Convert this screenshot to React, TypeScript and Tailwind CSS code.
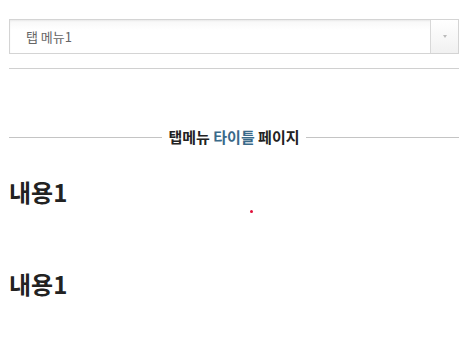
import React from "react";

export default function App() {
  const font = { fontFamily: '"Noto Sans CJK KR", "Noto Sans", sans-serif' };
  return (
    <div className="w-[474px] h-[345px] bg-white relative overflow-hidden" style={font}>
      <div className="pl-[9px] pr-[15px] pt-[19px]">
        <div className="flex h-[35px] border border-[#d4d4d4] bg-gradient-to-b from-[#f7f7f7] to-white to-[30%] shadow-[inset_0_1px_2px_rgba(0,0,0,0.06)]">
          <div className="flex-1 flex items-center pl-[16px] text-[13px] text-[#666]">탭 메뉴1</div>
          <div className="w-[28px] border-l border-[#d8d8d8] bg-gradient-to-b from-white to-[#f1f1f1] flex items-center justify-center">
            <div className="w-0 h-0 border-l-[2.5px] border-r-[2.5px] border-t-[3px] border-l-transparent border-r-transparent border-t-[#bbb]" />
          </div>
        </div>
        <div className="mt-[14px] h-px bg-[#d0d0d0]" />
        <div className="mt-[58px] flex items-center gap-[6px]">
          <div className="flex-1 h-px bg-[#c4c4c4]" />
          <div className="text-[15px] font-bold text-[#222] leading-[20px]">
            탭메뉴 <span className="text-[#3a6a89]">타이틀</span> 페이지
          </div>
          <div className="flex-1 h-px bg-[#c4c4c4]" />
        </div>
        <h2 className="mt-[30px] text-[24px] font-bold text-[#222] leading-[30px]">내용1</h2>
        <h2 className="mt-[62px] text-[24px] font-bold text-[#222] leading-[30px]">내용1</h2>
      </div>
      <div className="absolute left-[250px] top-[210px] w-[3px] h-[3px] rounded-full bg-[#e0103a]" />
    </div>
  );
}
